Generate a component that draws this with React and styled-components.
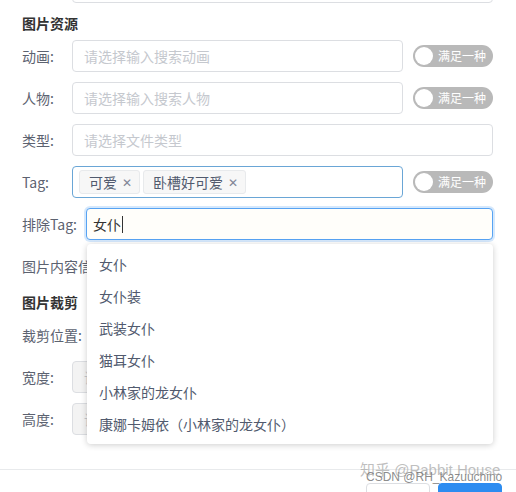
import React from 'react';
import styled, {createGlobalStyle} from 'styled-components';

const GlobalStyle = createGlobalStyle`
body{
  margin:0;
  background:#FFFFFF;
  font-family:"Noto Sans CJK SC", "Noto Sans", sans-serif;
  font-size:14px;
}
`

const Page = styled.div`
position:relative;
width:516px;
height:492px;
overflow:hidden;
background:#FFFFFF;
`
const Form = styled.div`
margin-top:-29px;
padding:0 23px 24px 22px;
`
const SectionTitle = styled.div`
font-size:14px;
font-weight:bold;
color:#333333;
line-height:20px;
margin:0 0 7px;
`
const Row = styled.div`
position:relative;
display:flex;
align-items:center;
margin-bottom:10px;
`
const Label = styled.div`
box-sizing:border-box;
min-width:50px;
padding-right:9px;
color:#5c6270;
font-size:14px;
line-height:20px;
white-space:nowrap;
`
const Field = styled.div`
position:relative;
box-sizing:border-box;
flex:${p => p.$width ? 'none' : '1'};
width:${p => p.$width ? p.$width + 'px' : 'auto'};
height:32px;
display:flex;
align-items:center;
gap:3px;
padding:0 ${p => p.$tags ? '6px' : '11px'};
border:1px solid ${p => p.$focused ? '#57a3f3' : p.$active ? '#6aa6d6' : '#dcdee2'};
border-radius:4px;
background:${p => p.$disabled ? '#f3f3f3' : p.$focused ? '#fffefa' : '#FFFFFF'};
box-shadow:${p => p.$focused ? '0 0 0 2px rgba(45,140,240,0.2)' : 'none'};
font-size:14px;
color:#515a6e;
`
const Placeholder = styled.span`
color:#c5c8ce;
white-space:nowrap;
`
const Typed = styled.span`
display:flex;
align-items:center;
color:#333333;
`
const Caret = styled.span`
display:inline-block;
width:1px;
height:17px;
margin-left:1px;
background:#333333;
`
const Tag = styled.span`
box-sizing:border-box;
display:flex;
align-items:center;
height:24px;
padding:0 7px 0 9px;
gap:5px;
background:#f7f7f7;
border:1px solid #e8eaec;
border-radius:3px;
color:#515a6e;
font-size:14px;
`
const Close = styled.span`
color:#808695;
font-size:12px;
line-height:1;
`
const Switch = styled.div`
position:relative;
flex:none;
box-sizing:border-box;
width:80px;
height:22px;
margin-left:10px;
border-radius:11px;
background:#b9b9b9;
color:#FFFFFF;
font-size:12px;
line-height:22px;
padding-left:25px;
&::before{
  content:'';
  position:absolute;
  left:2px;
  top:2px;
  width:18px;
  height:18px;
  border-radius:50%;
  background:#FFFFFF;
}
`
const Dropdown = styled.ul`
position:absolute;
left:65px;
right:0;
top:36px;
z-index:10;
list-style:none;
margin:0;
padding:4px 0;
background:#FFFFFF;
border-radius:4px;
box-shadow:0 1px 6px rgba(0,0,0,0.2);
`
const Option = styled.li`
height:32px;
line-height:32px;
padding:0 12px;
color:#515a6e;
font-size:14px;
white-space:nowrap;
`
const Footer = styled.div`
display:flex;
justify-content:flex-end;
gap:8px;
padding:13px 14px 0;
border-top:1px solid #e8eaec;
`
const Button = styled.div`
box-sizing:border-box;
width:64px;
height:32px;
display:flex;
align-items:center;
justify-content:center;
border-radius:4px;
border:1px solid ${p => p.$primary ? '#2d8cf0' : '#dcdee2'};
background:${p => p.$primary ? '#2d8cf0' : '#FFFFFF'};
color:${p => p.$primary ? '#FFFFFF' : '#515a6e'};
font-size:14px;
`
const Mark = styled.div`
position:absolute;
left:${p => p.$left}px;
top:${p => p.$top}px;
font-family:"Liberation Sans", "Noto Sans CJK SC", sans-serif;
font-size:${p => p.$size}px;
color:${p => p.$color};
white-space:nowrap;
pointer-events:none;
z-index:20;
`

const options = ['女仆', '女仆装', '武装女仆', '猫耳女仆', '小林家的龙女仆', '康娜卡姆依（小林家的龙女仆）'];

const App = () => {
    return <Page>
        <GlobalStyle/>
        <Form>
            <Row>
                <Label></Label>
                <Field/>
            </Row>
            <SectionTitle>图片资源</SectionTitle>
            <Row>
                <Label>动画:</Label>
                <Field><Placeholder>请选择输入搜索动画</Placeholder></Field>
                <Switch>满足一种</Switch>
            </Row>
            <Row>
                <Label>人物:</Label>
                <Field><Placeholder>请选择输入搜索人物</Placeholder></Field>
                <Switch>满足一种</Switch>
            </Row>
            <Row>
                <Label>类型:</Label>
                <Field><Placeholder>请选择文件类型</Placeholder></Field>
            </Row>
            <Row>
                <Label>Tag:</Label>
                <Field $active $tags>
                    <Tag>可爱<Close>✕</Close></Tag>
                    <Tag>卧槽好可爱<Close>✕</Close></Tag>
                </Field>
                <Switch>满足一种</Switch>
            </Row>
            <Row>
                <Label>排除Tag:</Label>
                <Field $focused $tags><Typed>女仆<Caret/></Typed></Field>
                <Dropdown>
                    {options.map(o => <Option key={o}>{o}</Option>)}
                </Dropdown>
            </Row>
            <Row>
                <Label>图片内容信息:</Label>
                <Field><Placeholder>请选择</Placeholder></Field>
            </Row>
            <SectionTitle>图片裁剪</SectionTitle>
            <Row>
                <Label>裁剪位置:</Label>
                <Field><Placeholder>请选择</Placeholder></Field>
            </Row>
            <Row>
                <Label>宽度:</Label>
                <Field $disabled $width={200}><Placeholder>请输入宽度</Placeholder></Field>
            </Row>
            <Row>
                <Label>高度:</Label>
                <Field $disabled $width={200}><Placeholder>请输入高度</Placeholder></Field>
            </Row>
        </Form>
        <Footer>
            <Button>取 消</Button>
            <Button $primary>创 建</Button>
        </Footer>
        <Mark $left={360} $top={458} $size={15} $color="rgba(170,170,170,0.75)">知乎 @Rabbit House</Mark>
        <Mark $left={366} $top={470} $size={12} $color="rgba(110,110,110,0.8)">CSDN @RH_Kazuuchino</Mark>
    </Page>
}

export default App;
